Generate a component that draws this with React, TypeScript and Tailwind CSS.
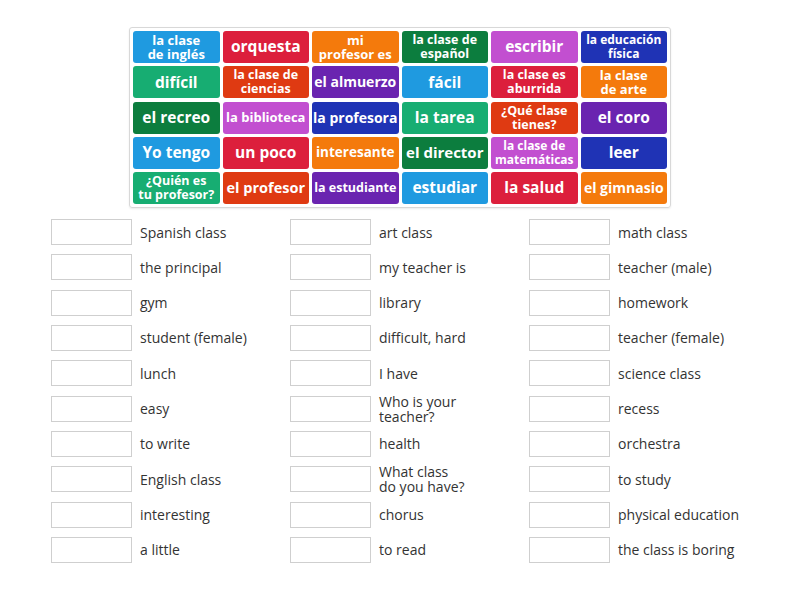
import { Fragment } from 'react'

type Tile = { text: string; bg: string; size: string }

const tiles: Tile[] = [
  { text: 'la clase\nde inglés', bg: 'bg-[#1f9ae0]', size: 'text-[13px]' },
  { text: 'orquesta', bg: 'bg-[#dc1f3c]', size: 'text-[15.5px]' },
  { text: 'mi\nprofesor es', bg: 'bg-[#f47a0c]', size: 'text-[13px]' },
  { text: 'la clase de\nespañol', bg: 'bg-[#0c7d3e]', size: 'text-[12.5px]' },
  { text: 'escribir', bg: 'bg-[#c24fd0]', size: 'text-[15.5px]' },
  { text: 'la educación\nfísica', bg: 'bg-[#1f33b5]', size: 'text-[12px]' },

  { text: 'difícil', bg: 'bg-[#17ad72]', size: 'text-[15.5px]' },
  { text: 'la clase de\nciencias', bg: 'bg-[#df3a12]', size: 'text-[12.5px]' },
  { text: 'el almuerzo', bg: 'bg-[#6a24b0]', size: 'text-[14px]' },
  { text: 'fácil', bg: 'bg-[#1f9ae0]', size: 'text-[15.5px]' },
  { text: 'la clase es\naburrida', bg: 'bg-[#dc1f3c]', size: 'text-[12.5px]' },
  { text: 'la clase\nde arte', bg: 'bg-[#f47a0c]', size: 'text-[13px]' },

  { text: 'el recreo', bg: 'bg-[#0c7d3e]', size: 'text-[15.5px]' },
  { text: 'la biblioteca', bg: 'bg-[#c24fd0]', size: 'text-[13px]' },
  { text: 'la profesora', bg: 'bg-[#1f33b5]', size: 'text-[14px]' },
  { text: 'la tarea', bg: 'bg-[#17ad72]', size: 'text-[15.5px]' },
  { text: '¿Qué clase\ntienes?', bg: 'bg-[#df3a12]', size: 'text-[12.5px]' },
  { text: 'el coro', bg: 'bg-[#6a24b0]', size: 'text-[15.5px]' },

  { text: 'Yo tengo', bg: 'bg-[#1f9ae0]', size: 'text-[15.5px]' },
  { text: 'un poco', bg: 'bg-[#dc1f3c]', size: 'text-[15.5px]' },
  { text: 'interesante', bg: 'bg-[#f47a0c]', size: 'text-[13.5px]' },
  { text: 'el director', bg: 'bg-[#0c7d3e]', size: 'text-[15px]' },
  { text: 'la clase de\nmatemáticas', bg: 'bg-[#c24fd0]', size: 'text-[12px]' },
  { text: 'leer', bg: 'bg-[#1f33b5]', size: 'text-[15.5px]' },

  { text: '¿Quién es\ntu profesor?', bg: 'bg-[#17ad72]', size: 'text-[12.5px]' },
  { text: 'el profesor', bg: 'bg-[#df3a12]', size: 'text-[14.5px]' },
  { text: 'la estudiante', bg: 'bg-[#6a24b0]', size: 'text-[12.5px]' },
  { text: 'estudiar', bg: 'bg-[#1f9ae0]', size: 'text-[15.5px]' },
  { text: 'la salud', bg: 'bg-[#dc1f3c]', size: 'text-[15.5px]' },
  { text: 'el gimnasio', bg: 'bg-[#f47a0c]', size: 'text-[14px]' },
]

const columns: string[][] = [
  ['Spanish class', 'the principal', 'gym', 'student (female)', 'lunch', 'easy', 'to write', 'English class', 'interesting', 'a little'],
  ['art class', 'my teacher is', 'library', 'difficult, hard', 'I have', 'Who is your\nteacher?', 'health', 'What class\ndo you have?', 'chorus', 'to read'],
  ['math class', 'teacher (male)', 'homework', 'teacher (female)', 'science class', 'recess', 'orchestra', 'to study', 'physical education', 'the class is boring'],
]

function Lines({ text }: { text: string }) {
  const parts = text.split('\n')
  return (
    <>
      {parts.map((p, i) => (
        <Fragment key={i}>
          {i > 0 && <br />}
          {p}
        </Fragment>
      ))}
    </>
  )
}

export default function App() {
  return (
    <div className="w-[800px] h-[600px] bg-white overflow-hidden font-['Open_Sans',sans-serif]">
      <div className="flex justify-center pt-[27px]">
        <div className="w-[542px] border border-[#d8d8d8] rounded-[3px] p-[3px] shadow-[0_1px_2px_rgba(0,0,0,0.08)]">
          <div className="grid grid-cols-6 gap-x-[3px] gap-y-[3.25px]">
            {tiles.map((t, i) => (
              <div
                key={i}
                className={`${t.bg} h-[32px] rounded-[3px] flex items-center justify-center text-center text-white font-bold whitespace-nowrap overflow-hidden ${t.size} ${t.text.includes('\n') ? 'leading-[14px]' : 'leading-none'}`}
              >
                <span>
                  <Lines text={t.text} />
                </span>
              </div>
            ))}
          </div>
        </div>
      </div>

      <div className="flex pl-[51px] pt-[11px]">
        {columns.map((col, ci) => (
          <div key={ci} className="w-[239px] flex flex-col gap-y-[9.33px]">
            {col.map((label, ri) => (
              <div key={ri} className="flex items-center h-[26px]">
                <div className="w-[81px] h-[26px] border border-[#cfcfcf] bg-white shrink-0" />
                <div className="ml-[8px] text-[14px] leading-[15px] text-[#333333] whitespace-nowrap">
                  <Lines text={label} />
                </div>
              </div>
            ))}
          </div>
        ))}
      </div>
    </div>
  )
}
